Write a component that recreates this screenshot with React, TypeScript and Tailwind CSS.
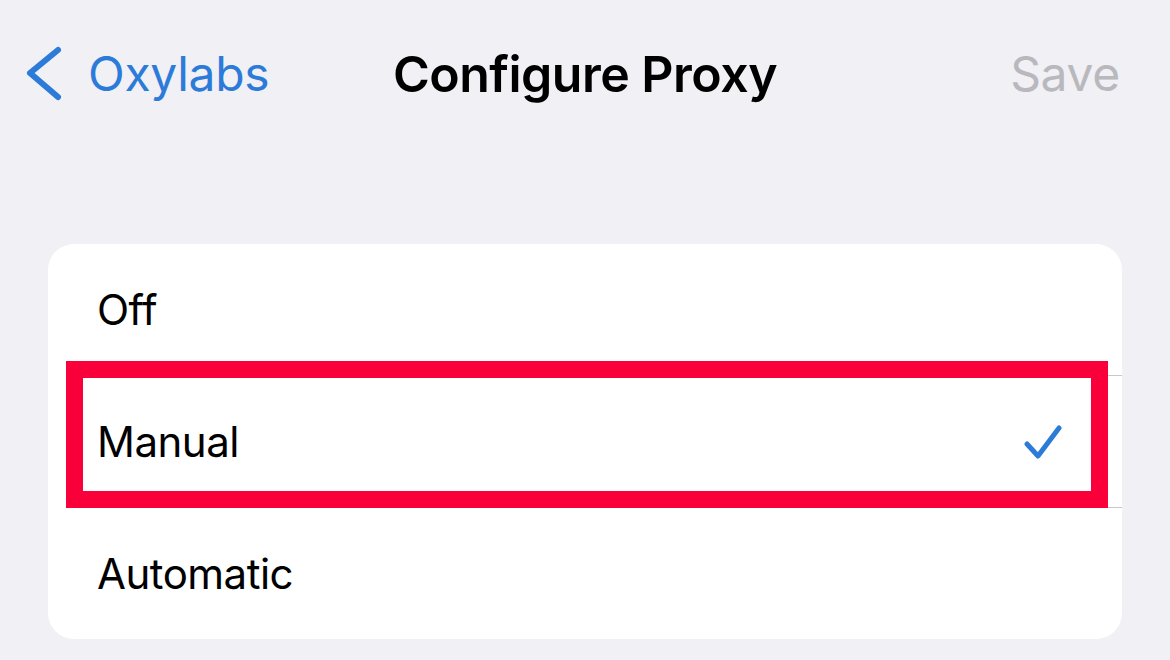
import React from "react";

export default function App() {
  const font = { fontFamily: "Inter, 'Noto Sans', sans-serif" } as React.CSSProperties;
  return (
    <div className="w-[1170px] h-[660px] bg-[#f0f0f5] overflow-hidden" style={font}>
      <div className="h-[150px] grid grid-cols-[1fr_auto_1fr] items-center px-[28px] -mt-[1px]">
        <div className="flex items-center gap-[26px] text-[#2d7bd8] -ml-[2px]">
          <svg width="36" height="56" viewBox="0 0 36 56" className="shrink-0">
            <polyline points="32,4 4,27 32,51" fill="none" stroke="#2d7bd8" strokeWidth="6" strokeLinecap="round" strokeLinejoin="round" />
          </svg>
          <span className="text-[48px] leading-none tracking-[-0.3px]">Oxylabs</span>
        </div>
        <div className="text-[50px] leading-none font-semibold text-black tracking-[-0.5px]">Configure Proxy</div>
        <div className="flex justify-end pr-[22px] text-[48px] leading-none text-[#b9b9bd] tracking-[-0.3px]">Save</div>
      </div>
      <div className="px-[48px] pt-[95px]">
        <div className="relative bg-white rounded-[26px] text-black text-[42px] tracking-[-0.5px]">
          <div className="h-[131px] flex items-center pl-[49px]">Off</div>
          <div className="ml-[49px] h-[1px] bg-[#c8c8cc]" />
          <div className="h-[131px] flex items-center pl-[49px] pr-[58px] justify-between">
            <span>Manual</span>
            <svg width="40" height="40" viewBox="0 0 40 40">
              <polyline points="3,22 14,34 35,6" fill="none" stroke="#2d7bd8" strokeWidth="5" strokeLinecap="round" strokeLinejoin="round" />
            </svg>
          </div>
          <div className="ml-[49px] h-[1px] bg-[#c8c8cc]" />
          <div className="h-[131px] flex items-center pl-[49px]">Automatic</div>
          <div className="absolute left-[18px] top-[117px] w-[1042px] h-[147px] border-[17px] border-[#f9003a]" />
        </div>
      </div>
    </div>
  );
}
